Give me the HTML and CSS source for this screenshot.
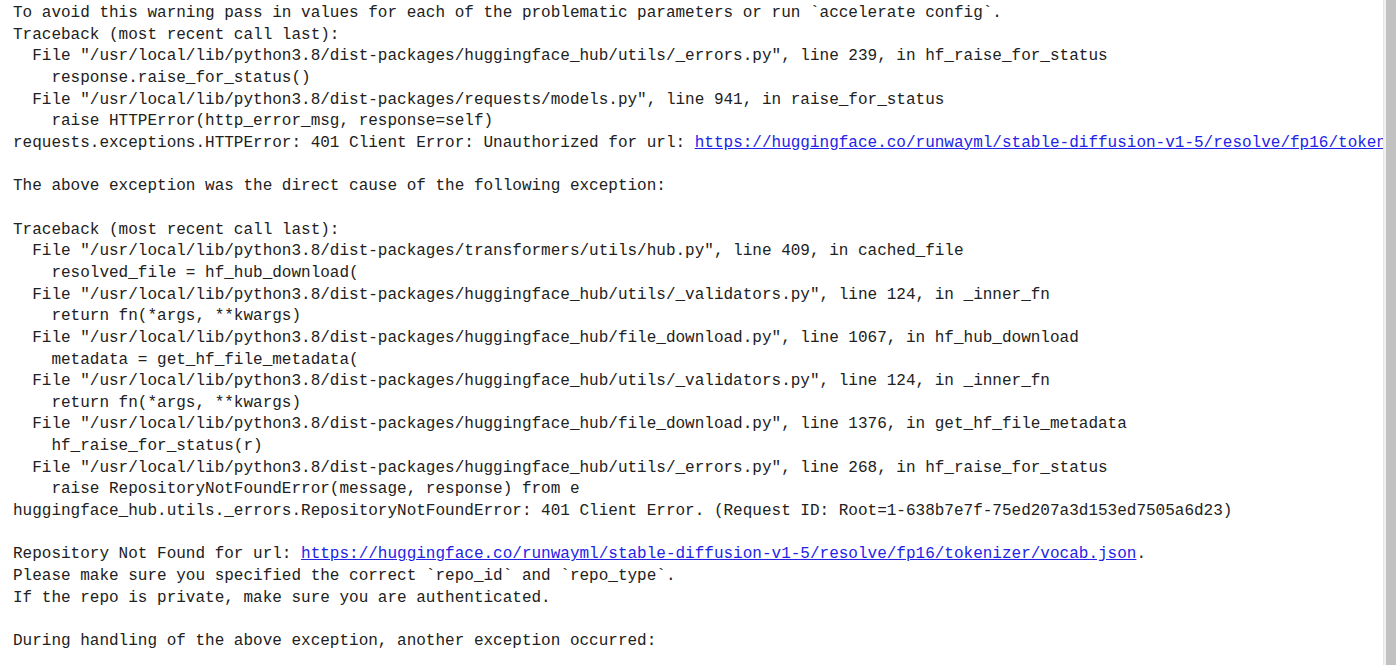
FILE: index.html
```html
<!DOCTYPE html>
<html lang="en">
<head>
<meta charset="utf-8">
<title>Output</title>
<link rel="stylesheet" href="styles.css">
</head>
<body>
<div class="frame">
<div class="output"><pre class="log">To avoid this warning pass in values for each of the problematic parameters or run `accelerate config`.
Traceback (most recent call last):
  File "/usr/local/lib/python3.8/dist-packages/huggingface_hub/utils/_errors.py", line 239, in hf_raise_for_status
    response.raise_for_status()
  File "/usr/local/lib/python3.8/dist-packages/requests/models.py", line 941, in raise_for_status
    raise HTTPError(http_error_msg, response=self)
requests.exceptions.HTTPError: 401 Client Error: Unauthorized for url: <a class="link" href="#">https://huggingface.co/runwayml/stable-diffusion-v1-5/resolve/fp16/tokenizer/vocab.json</a>

The above exception was the direct cause of the following exception:

Traceback (most recent call last):
  File "/usr/local/lib/python3.8/dist-packages/transformers/utils/hub.py", line 409, in cached_file
    resolved_file = hf_hub_download(
  File "/usr/local/lib/python3.8/dist-packages/huggingface_hub/utils/_validators.py", line 124, in _inner_fn
    return fn(*args, **kwargs)
  File "/usr/local/lib/python3.8/dist-packages/huggingface_hub/file_download.py", line 1067, in hf_hub_download
    metadata = get_hf_file_metadata(
  File "/usr/local/lib/python3.8/dist-packages/huggingface_hub/utils/_validators.py", line 124, in _inner_fn
    return fn(*args, **kwargs)
  File "/usr/local/lib/python3.8/dist-packages/huggingface_hub/file_download.py", line 1376, in get_hf_file_metadata
    hf_raise_for_status(r)
  File "/usr/local/lib/python3.8/dist-packages/huggingface_hub/utils/_errors.py", line 268, in hf_raise_for_status
    raise RepositoryNotFoundError(message, response) from e
huggingface_hub.utils._errors.RepositoryNotFoundError: 401 Client Error. (Request ID: Root=1-638b7e7f-75ed207a3d153ed7505a6d23)

Repository Not Found for url: <a class="link" href="#">https://huggingface.co/runwayml/stable-diffusion-v1-5/resolve/fp16/tokenizer/vocab.json</a>.
Please make sure you specified the correct `repo_id` and `repo_type`.
If the repo is private, make sure you are authenticated.

During handling of the above exception, another exception occurred:
</pre></div>
<div class="scrollbar"><div class="thumb"></div></div>
</div>
</body>
</html>
```
FILE: styles.css
```css
html, body {
  margin: 0;
  padding: 0;
  background: #ffffff;
}
.frame {
  display: flex;
  height: 665px;
  overflow: hidden;
}
.output {
  flex: 1;
  min-width: 0;
  overflow: hidden;
}
.log {
  margin: 0;
  padding: 3px 0 0 13px;
  font-family: "Liberation Mono", "DejaVu Sans Mono", monospace;
  font-size: 16px;
  line-height: 21.66px;
  color: #212121;
  white-space: pre;
}
.link {
  color: #2323e6;
  text-decoration: underline;
}
.scrollbar {
  width: 13px;
  flex: 0 0 13px;
  background: #f1f1f1;
  display: flex;
  padding-left: 2px;
  box-sizing: border-box;
  border-left: 1px solid #e6e6e6;
}
.thumb {
  flex: 1;
  background: #c1c1c1;
}
```
